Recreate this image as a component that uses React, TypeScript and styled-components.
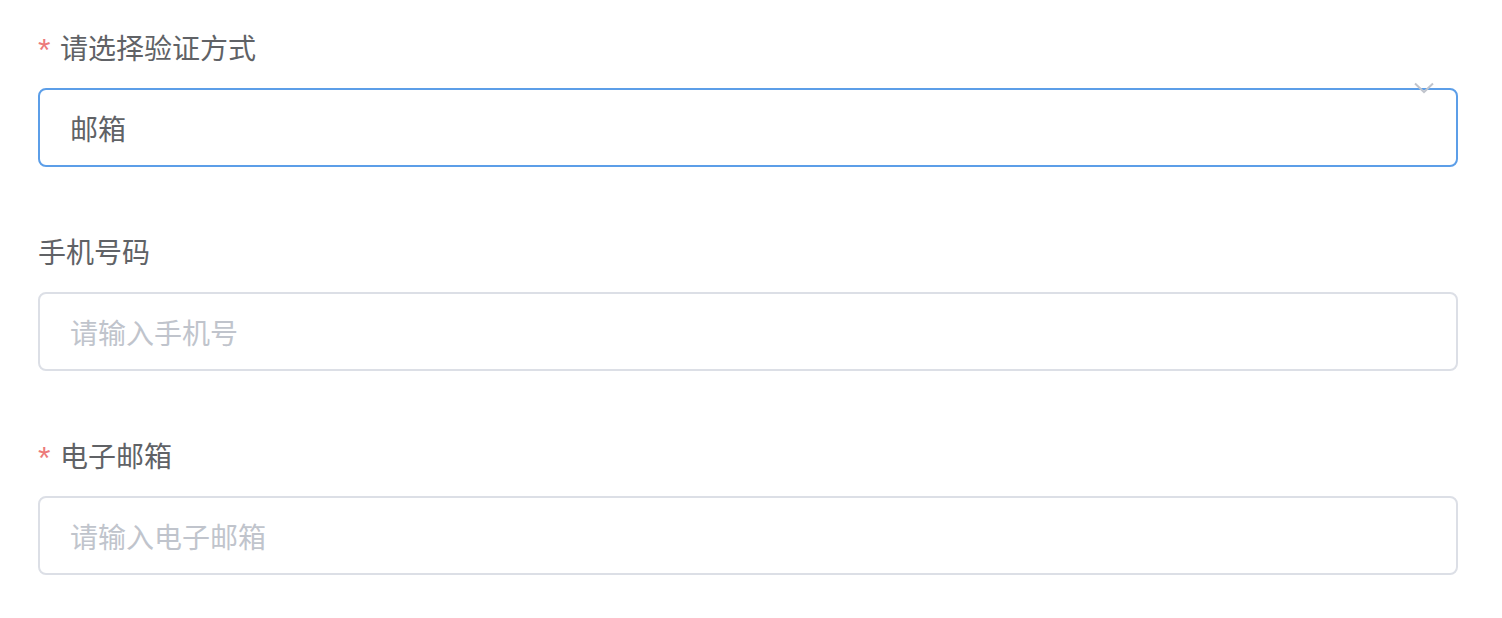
import * as React from 'react'
import styled, { createGlobalStyle } from 'styled-components'

const GlobalStyle = createGlobalStyle`
  html, body {
    margin: 0;
    padding: 0;
    background: #ffffff;
  }
  body {
    font-family: "Noto Sans CJK SC", "Noto Sans", sans-serif;
  }
`

const Form = styled.form`
  padding: 27px 44px 0 38px;
`

const FormItem = styled.div`
  margin-bottom: 64px;
`

const Label = styled.label`
  display: flex;
  align-items: center;
  height: 40px;
  font-size: 28px;
  color: #606266;
  margin-bottom: 21px;
`

const Required = styled.span`
  color: #ec7a7a;
  font-size: 32px;
  font-family: "Liberation Sans", sans-serif;
  width: 22px;
  margin-top: 6px;
`

const Field = styled.div`
  position: relative;
`

const Input = styled.input<{ $focused?: boolean }>`
  box-sizing: border-box;
  display: block;
  width: 100%;
  height: 79px;
  padding: 0 30px;
  border: 2px solid ${p => (p.$focused ? '#5c9ee8' : '#dcdfe6')};
  border-radius: 8px;
  outline: none;
  font-family: inherit;
  font-size: 28px;
  color: #606266;
  background: #ffffff;

  &::placeholder {
    color: #c0c4cc;
  }
`

const Arrow = styled.svg`
  position: absolute;
  right: 23px;
  top: -6px;
  width: 22px;
  height: 12px;
`

export default function App() {
  return (
    <>
      <GlobalStyle />
      <Form onSubmit={e => e.preventDefault()}>
        <FormItem>
          <Label>
            <Required>*</Required>请选择验证方式
          </Label>
          <Field>
            <Input $focused readOnly value="邮箱" />
            <Arrow viewBox="0 0 22 12" fill="none">
              <path d="M2 1.5 L11 10 L20 1.5" stroke="#c0c4cc" strokeWidth="2" />
            </Arrow>
          </Field>
        </FormItem>
        <FormItem>
          <Label>手机号码</Label>
          <Field>
            <Input placeholder="请输入手机号" />
          </Field>
        </FormItem>
        <FormItem>
          <Label>
            <Required>*</Required>电子邮箱
          </Label>
          <Field>
            <Input placeholder="请输入电子邮箱" />
          </Field>
        </FormItem>
      </Form>
    </>
  )
}
